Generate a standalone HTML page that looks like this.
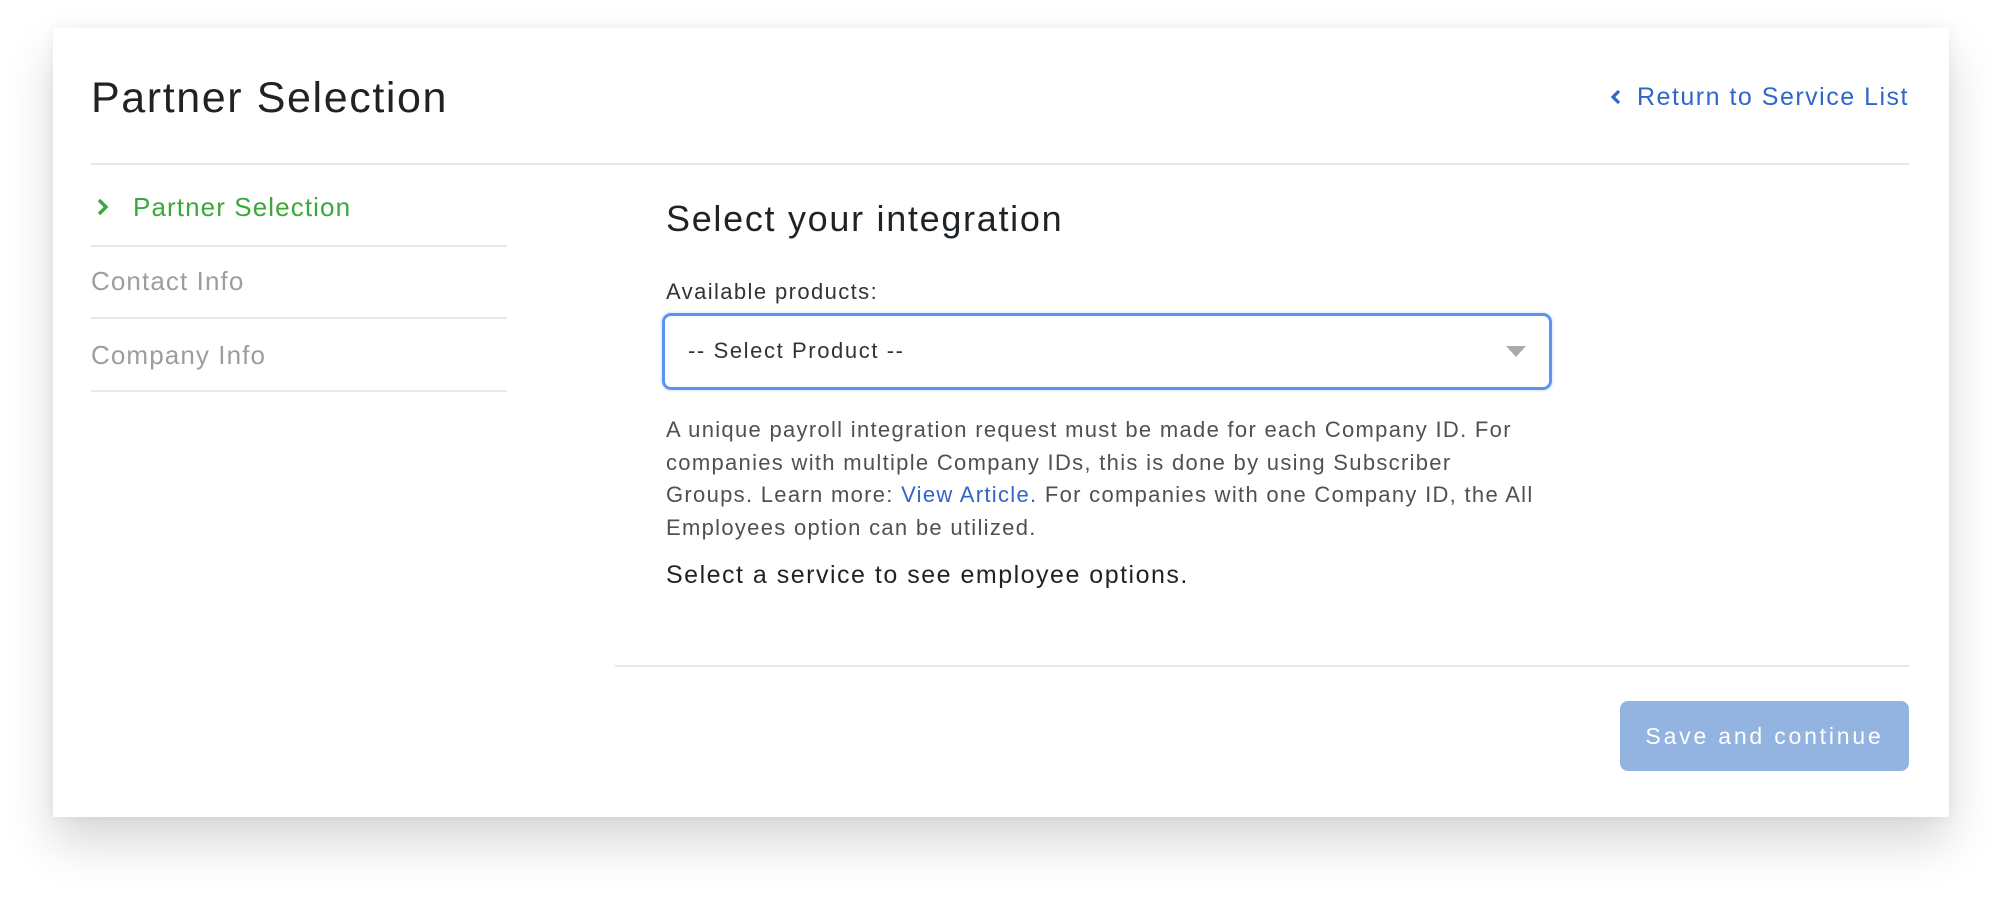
<!DOCTYPE html>
<html><head><meta charset="utf-8"><style>
*{margin:0;padding:0;box-sizing:border-box}
html,body{width:2001px;height:897px;background:#fff;overflow:hidden;font-family:"Liberation Sans",sans-serif}
.card{position:absolute;left:53px;top:28px;width:1896px;height:789px;background:#fff;box-shadow:0 25px 45px rgba(0,0,0,0.16),0 0 12px rgba(0,0,0,0.05)}
.abs{position:absolute;white-space:nowrap}
.line{position:absolute;height:2px;background:#e6e8eb}
.side{letter-spacing:1.1px}
</style></head><body>
<div class="card"></div>
<div class="abs" style="left:91px;top:74px;font-size:43px;color:#1f2326;letter-spacing:1.6px">Partner Selection</div>
<svg class="abs" style="left:1609px;top:88px" width="14" height="18" viewBox="0 0 14 18"><path d="M10 3 L4 9 L10 15" fill="none" stroke="#2f66c8" stroke-width="3.2"/></svg>
<div class="abs" style="right:92px;top:83px;font-size:25px;color:#2f66c8;letter-spacing:1.5px">Return to Service List</div>
<div class="line" style="left:91px;top:163px;width:1818px"></div>
<svg class="abs" style="left:96px;top:197px" width="14" height="20" viewBox="0 0 14 20"><path d="M3 3 L10 10 L3 17" fill="none" stroke="#3aa93a" stroke-width="3.4"/></svg>
<div class="abs side" style="left:133px;top:192px;font-size:26px;color:#3aa93a;">Partner Selection</div>
<div class="line" style="left:91px;top:245px;width:416px"></div>
<div class="abs side" style="left:91px;top:266px;font-size:26px;color:#9a9ea2;">Contact Info</div>
<div class="line" style="left:91px;top:317px;width:416px"></div>
<div class="abs side" style="left:91px;top:340px;font-size:26px;color:#9a9ea2;">Company Info</div>
<div class="line" style="left:91px;top:390px;width:416px"></div>
<div class="abs" style="left:666px;top:198px;font-size:36px;color:#1f2326;letter-spacing:1.7px">Select your integration</div>
<div class="abs" style="left:666px;top:279px;font-size:22px;color:#333;letter-spacing:1.4px">Available products:</div>
<div class="abs" style="left:662px;top:313px;width:890px;height:77px;border:3.5px solid #5b95ef;border-radius:9px;box-shadow:0 0 3px rgba(91,149,239,.4)"></div>
<div class="abs" style="left:688px;top:338px;font-size:22px;color:#333;letter-spacing:1.6px">-- Select Product --</div>
<svg class="abs" style="left:1506px;top:346px" width="20" height="12" viewBox="0 0 20 12"><path d="M0 0 L20 0 L10 11Z" fill="#aaa"/></svg>
<div class="abs" style="left:666px;top:414px;font-size:22px;line-height:32.5px;color:#4d5156;letter-spacing:1.3px">A unique payroll integration request must be made for each Company ID. For<br>companies with multiple Company IDs, this is done by using Subscriber<br>Groups. Learn more: <span style="color:#2f66c8">View Article.</span> For companies with one Company ID, the All<br>Employees option can be utilized.</div>
<div class="abs" style="left:666px;top:561px;font-size:25px;color:#1f2326;letter-spacing:1.5px">Select a service to see employee options.</div>
<div class="line" style="left:615px;top:665px;width:1294px"></div>
<div class="abs" style="left:1620px;top:701px;width:289px;height:70px;background:#93b3e0;border-radius:8px;color:#fff;font-size:23px;text-align:center;line-height:70px;letter-spacing:2.8px">Save and continue</div>
</body></html>
